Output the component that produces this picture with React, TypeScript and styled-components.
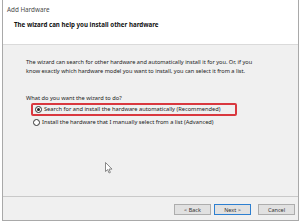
import React, { FC } from 'react';
import styled, { createGlobalStyle, css } from 'styled-components';

const GlobalStyle = createGlobalStyle`
  html, body {
    margin: 0;
    padding: 0;
    background: #ffffff;
  }
  body {
    font-family: "Noto Sans", "Open Sans", sans-serif;
    -webkit-font-smoothing: antialiased;
  }
`;

interface RadioOptionProps {
  label: string;
  checked?: boolean;
  highlighted?: boolean;
}

const RadioOption: FC<RadioOptionProps> = ({ label, checked, highlighted }) => (
  <OptionRow $highlighted={highlighted}>
    <RadioDot $checked={checked} />
    <OptionLabel>{label}</OptionLabel>
  </OptionRow>
);

const Cursor: FC = () => (
  <CursorWrap>
    <svg width="8" height="12" viewBox="0 0 8 12">
      <path
        d="M0.5 0.5 L0.5 9.5 L2.6 7.6 L4.1 11 L5.4 10.4 L4 7.1 L7 7.1 Z"
        fill="#ffffff"
        stroke="#6d6d6d"
        strokeWidth="0.8"
        strokeLinejoin="round"
      />
    </svg>
  </CursorWrap>
);

export default function App() {
  return (
    <>
      <GlobalStyle />
      <Window>
        <TitleBar>Add Hardware</TitleBar>
        <Header>
          <HeaderTitle>The wizard can help you install other hardware</HeaderTitle>
        </Header>
        <Body>
          <Paragraph>
            The wizard can search for other hardware and automatically install it for you. Or, if you
            <br />
            know exactly which hardware model you want to install, you can select it from a list.
          </Paragraph>
          <Question>What do you want the wizard to do?</Question>
          <Options>
            <RadioOption
              label="Search for and install the hardware automatically (Recommended)"
              checked
              highlighted
            />
            <RadioOption label="Install the hardware that I manually select from a list (Advanced)" />
          </Options>
          <Cursor />
        </Body>
        <Footer>
          <Button>&lt; Back</Button>
          <Button $primary>Next &gt;</Button>
          <CancelButton>Cancel</CancelButton>
        </Footer>
      </Window>
    </>
  );
}

const Window = styled.div`
  margin-left: 2px;
  width: 295px;
  height: 220px;
  display: flex;
  flex-direction: column;
  border-left: 1px solid #a9a9a9;
  border-right: 1px solid #a9a9a9;
  border-bottom: 1px solid #a9a9a9;
  background: #f0f0f0;
`;

const TitleBar = styled.div`
  height: 18px;
  display: flex;
  align-items: center;
  padding-left: 4px;
  background: #ffffff;
  font-size: 6.3px;
  color: #4a4a4a;
`;

const Header = styled.div`
  height: 27px;
  padding: 2px 0 0 11px;
  box-sizing: border-box;
  background: #ffffff;
  border-bottom: 1px solid #dadada;
`;

const HeaderTitle = styled.div`
  font-size: 6.2px;
  font-weight: 700;
  line-height: 9px;
  color: #111111;
`;

const Body = styled.div`
  position: relative;
  flex: 1;
  display: flex;
  flex-direction: column;
  padding: 13px 0 0 23px;
  border-bottom: 1px solid #c9c9c9;
`;

const Paragraph = styled.div`
  font-size: 5.6px;
  line-height: 9px;
  color: #222222;
  white-space: nowrap;
`;

const Question = styled.div`
  margin-top: 18px;
  font-size: 5.7px;
  line-height: 9px;
  color: #222222;
`;

const Options = styled.div`
  display: flex;
  flex-direction: column;
  margin-left: 5px;
`;

const OptionRow = styled.div<{ $highlighted?: boolean }>`
  display: flex;
  align-items: center;
  gap: 2px;
  height: 13px;
  width: 206px;
  box-sizing: border-box;
  border-radius: 2px;
  ${({ $highlighted }) =>
    $highlighted
      ? css`
          border: 2px solid #d9383f;
          padding-left: 2px;
        `
      : css`
          border: 2px solid transparent;
          padding-left: 0px;
        `}
`;

const RadioDot = styled.span<{ $checked?: boolean }>`
  position: relative;
  width: 5px;
  height: 5px;
  border-radius: 50%;
  border: 1px solid #333333;
  background: #ffffff;
  flex-shrink: 0;
  ${({ $checked }) =>
    $checked &&
    css`
      &::after {
        content: '';
        position: absolute;
        left: 1px;
        top: 1px;
        width: 3px;
        height: 3px;
        border-radius: 50%;
        background: #222222;
      }
    `}
`;

const OptionLabel = styled.span`
  font-size: 5.7px;
  line-height: 9px;
  color: #222222;
  white-space: nowrap;
`;

const CursorWrap = styled.div`
  position: absolute;
  left: 102px;
  top: 112px;
  width: 8px;
  height: 12px;
`;

const Footer = styled.div`
  height: 23px;
  display: flex;
  align-items: center;
  justify-content: flex-end;
  gap: 3px;
  padding: 2px 3px 0 0;
  box-sizing: border-box;
`;

const Button = styled.div<{ $primary?: boolean }>`
  width: 37px;
  height: 11px;
  box-sizing: border-box;
  display: flex;
  align-items: center;
  justify-content: center;
  font-size: 5.5px;
  color: #333333;
  background: #e1e1e1;
  border: 1px solid ${({ $primary }) => ($primary ? '#2d7fd0' : '#adadad')};
`;

const CancelButton = styled(Button)`
  margin-left: 4px;
`;
